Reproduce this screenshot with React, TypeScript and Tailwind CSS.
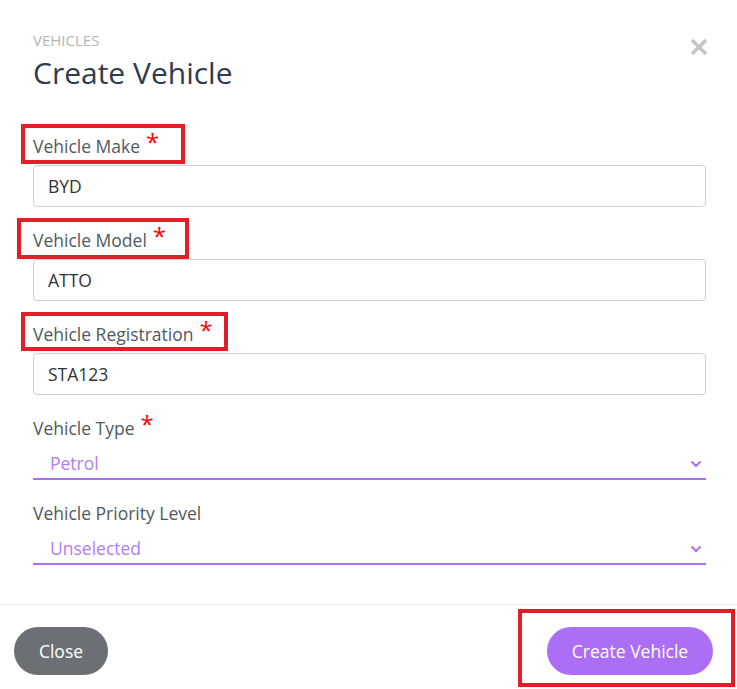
import React from "react";

function Star() {
  return (
    <span className="ml-[6px] inline-block align-top text-[24px] font-medium leading-none text-[#ff0000] -translate-y-[4px]">
      *
    </span>
  );
}

function TextField({ label, value, required }: { label: string; value: string; required?: boolean }) {
  return (
    <div className="flex flex-col">
      <label className="text-[17.5px] leading-[24px] text-[#4f5962]">
        {label}
        {required && <Star />}
      </label>
      <div className="mt-[7px] flex h-[42px] items-center rounded-[4px] border border-[#cfcfcf] px-[14px] text-[17.5px] text-[#333]">
        {value}
      </div>
    </div>
  );
}

function SelectField({ label, value, required }: { label: string; value: string; required?: boolean }) {
  return (
    <div className="flex flex-col">
      <label className="text-[17.5px] leading-[24px] text-[#4f5962]">
        {label}
        {required && <Star />}
      </label>
      <div className="mt-[4px] flex items-center justify-between border-b-2 border-[#a970f0] pb-[3px] pl-[17px] pr-[4px] pt-[7px]">
        <span className="text-[17.5px] leading-[24px] text-[#b27cf7]">{value}</span>
        <svg width="12" height="8" viewBox="0 0 12 8" fill="none" className="translate-y-[1px]">
          <path d="M1.5 1.5 L6 6 L10.5 1.5" stroke="#a970f0" strokeWidth="2" />
        </svg>
      </div>
    </div>
  );
}

export default function App() {
  return (
    <div
      className="relative flex h-[689px] w-[737px] flex-col overflow-hidden bg-white"
      style={{ fontFamily: '"Open Sans", sans-serif' }}
    >
      <div className="flex flex-col pl-[33px] pr-[31px] pt-[30px] pb-[39px]">
        <div className="text-[15px] leading-[20px] text-[#b4b4b4]">VEHICLES</div>
        <h1 className="mt-[5px] text-[30px] leading-[36px] text-[#2f3c4e]">Create Vehicle</h1>
        <div className="mt-[43px] flex flex-col gap-[21px]">
          <TextField label="Vehicle Make" value="BYD" required />
          <TextField label="Vehicle Model" value="ATTO" required />
          <TextField label="Vehicle Registration" value="STA123" required />
          <SelectField label="Vehicle Type" value="Petrol" required />
          <SelectField label="Vehicle Priority Level" value="Unselected" />
        </div>
      </div>
      <div className="flex items-center justify-between border-t border-[#e5e5e5] pb-[14px] pl-[14px] pr-[24px] pt-[22px]">
        <button className="h-[48px] w-[94px] rounded-full bg-[#6c7075] text-[17.5px] font-medium text-white">
          Close
        </button>
        <button className="h-[48px] w-[166px] rounded-full bg-[#ad6ef6] text-[17.5px] font-medium text-white">
          Create Vehicle
        </button>
      </div>

      <button className="absolute right-[29px] top-[38px]">
        <svg width="18" height="18" viewBox="0 0 18 18">
          <path d="M2 2 L16 16 M16 2 L2 16" stroke="#c4c4c4" strokeWidth="3.5" />
        </svg>
      </button>

      {/* annotation boxes */}
      <div className="pointer-events-none absolute left-[21px] top-[124px] h-[40px] w-[164px] border-[4px] border-[#e41e26]" />
      <div className="pointer-events-none absolute left-[17px] top-[218px] h-[41px] w-[172px] border-[4px] border-[#e41e26]" />
      <div className="pointer-events-none absolute left-[21px] top-[312px] h-[39px] w-[207px] border-[4px] border-[#e41e26]" />
      <div className="pointer-events-none absolute left-[518px] top-[609px] h-[78px] w-[217px] border-[4px] border-[#e41e26]" />
    </div>
  );
}
